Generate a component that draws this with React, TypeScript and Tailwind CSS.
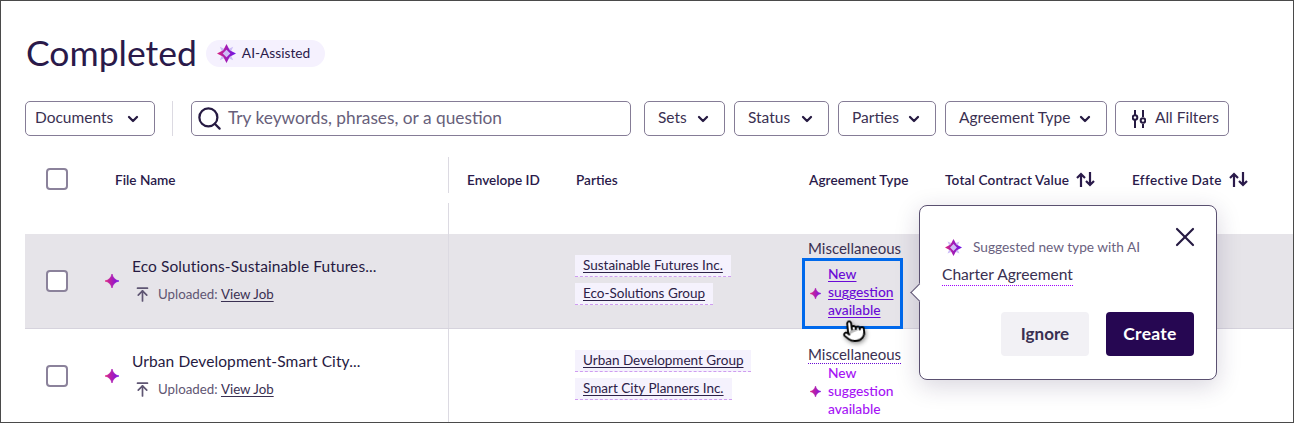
import { ArrowUpToLine, ChevronDown, Pointer, Search, X } from "lucide-react";

const FONT = "font-['Lato','Noto_Sans',sans-serif]";

function Sparkle({ id, size = 14 }: { id: string; size?: number }) {
  return (
    <svg width={size} height={size} viewBox="0 0 16 16" className="shrink-0">
      <defs>
        <linearGradient id={id} x1="0" y1="0" x2="1" y2="0">
          <stop offset="0" stopColor="#e0287f" />
          <stop offset="1" stopColor="#7a12e8" />
        </linearGradient>
      </defs>
      <path d="M8 0 C9 4 11.5 7 16 8 C11.5 9 9 12 8 16 C7 12 4.5 9 0 8 C4.5 7 7 4 8 0Z" fill={`url(#${id})`} stroke={`url(#${id})`} strokeWidth="0.8" />
    </svg>
  );
}

function AiMark({ id, size = 20 }: { id: string; size?: number }) {
  return (
    <svg width={size} height={size} viewBox="0 0 20 20" className="shrink-0">
      <defs>
        <linearGradient id={id} x1="0" y1="0" x2="1" y2="0">
          <stop offset="0" stopColor="#d9237f" />
          <stop offset="1" stopColor="#6a14ea" />
        </linearGradient>
      </defs>
      <path d="M3 3 L10 6 L17 3 L14 10 L17 17 L10 14 L3 17 L6 10Z" fill="#cdbcf7" />
      <path
        fillRule="evenodd"
        d="M10 0 L13.4 6.6 L20 10 L13.4 13.4 L10 20 L6.6 13.4 L0 10 L6.6 6.6Z M10 6 L6 10 L10 14 L14 10Z"
        fill={`url(#${id})`}
      />
    </svg>
  );
}

function FilterButton({ label, className }: { label: string; className: string }) {
  return (
    <button className={`h-[35px] flex items-center justify-between border border-[#857c96] rounded-[5px] bg-white text-[15.5px] text-[#3a3052] ${className}`}>
      <span className="pb-px">{label}</span>
      <ChevronDown size={16} strokeWidth={3.4} className="text-[#261a42]" />
    </button>
  );
}

function Checkbox() {
  return <div className="w-[22px] h-[22px] rounded-[4px] border-2 border-[#8b829b] bg-white shrink-0" />;
}

function SortArrows() {
  return (
    <svg width="19" height="15" viewBox="0 0 19 15" fill="none" stroke="#2a1a4a" strokeWidth="2.2" className="ml-[7px] shrink-0">
      <path d="M5 15V2M1 6l4-4 4 4" />
      <path d="M14 0v13M10 9l4 4 4-4" />
    </svg>
  );
}

function PartyChip({ name }: { name: string }) {
  return (
    <div className="w-fit h-[22px] px-2 flex items-center bg-[#f5f2fd] border-b border-dashed border-[#cf9df0] text-[13.5px] text-[#2c2147] underline underline-offset-2">
      {name}
    </div>
  );
}

function Row({ id, file, parties, bg, children }: { id: string; file: string; parties: string[]; bg: string; children: React.ReactNode }) {
  return (
    <div className={`h-[95px] ml-[24px] flex shrink-0 border-b border-[#d6d3dd] ${bg}`}>
      <div className="w-[424px] shrink-0 flex items-center border-r border-[#dcdae2]">
        <div className="ml-[21px]"><Checkbox /></div>
        <div className="ml-[37px]"><Sparkle id={id} /></div>
        <div className="ml-[13px] pb-[2px] flex flex-col gap-[10px]">
          <div className="text-[15.5px] leading-[18px] text-[#261a42] tracking-[0.1px]">{file}</div>
          <div className="flex items-center text-[13.3px] leading-[18px] text-[#5f5673]">
            <ArrowUpToLine size={17} strokeWidth={2.4} className="ml-[2px] mr-[7px] text-[#5f5673]" />
            Uploaded:&nbsp;<span className="underline underline-offset-2 text-[#3a3052]">View Job</span>
          </div>
        </div>
      </div>
      <div className="w-[126px] shrink-0" />
      <div className="w-[233px] shrink-0 pb-[2px] flex flex-col justify-center gap-[6px]">
        {parties.map((p) => <PartyChip key={p} name={p} />)}
      </div>
      <div className="flex-1 min-w-0">{children}</div>
    </div>
  );
}

export default function App() {
  return (
    <div className={`relative w-[1294px] h-[423px] overflow-hidden bg-white border border-[#4a4a4a] ${FONT}`}>
      {/* Title */}
      <div className="h-[100px] pl-[25px] pt-[32px] flex items-start gap-[9px]">
        <h1 className="text-[35.5px] leading-[40px] text-[#2a1a4a]">Completed</h1>
        <div className="mt-[7px] h-[27px] pl-[11px] pr-[15px] flex items-center gap-[6px] rounded-full bg-[#f5f1fe] text-[13.7px] text-[#2a1a4a]">
          <AiMark id="ai-badge" size={19} />
          AI-Assisted
        </div>
      </div>

      {/* Filters */}
      <div className="h-[35px] ml-[24px] flex items-center">
        <FilterButton label="Documents" className="w-[130px] pl-[9px] pr-[13px]" />
        <div className="w-px h-[35px] bg-[#dcdae2] ml-[17px] mr-[18px]" />
        <div className="w-[440px] h-[35px] flex items-center border border-[#857c96] rounded-[5px] pl-[4px] gap-[5px]">
          <Search size={27} strokeWidth={2} className="text-[#261a42]" />
          <span className="pb-px text-[17.3px] text-[#685f7b]">Try keywords, phrases, or a question</span>
        </div>
        <FilterButton label="Sets" className="w-[81px] px-[13px] ml-[13px]" />
        <FilterButton label="Status" className="w-[95px] px-[13px] ml-[9px]" />
        <FilterButton label="Parties" className="w-[98px] px-[13px] ml-[9px]" />
        <FilterButton label="Agreement Type" className="w-[162px] px-[13px] ml-[9px]" />
        <button className="w-[114px] h-[35px] ml-[8px] flex items-center pl-[16px] gap-[9px] border border-[#857c96] rounded-[5px] text-[15.5px] text-[#3a3052]">
          <svg width="14" height="20" viewBox="0 0 14 20" fill="none" stroke="#261a42" strokeWidth="2" className="shrink-0">
            <path d="M3 1v5M3 11v8M11 1v7M11 15v4" />
            <circle cx="3" cy="8.5" r="2.3" />
            <circle cx="11" cy="11.5" r="2.3" />
          </svg>
          <span className="pb-px">All Filters</span>
        </button>
      </div>

      {/* Table header */}
      <div className="mt-[21px] h-[36px] ml-[24px] flex text-[13.6px] font-semibold text-[#2a1a4a]">
        <div className="w-[424px] h-full shrink-0 flex items-start border-r border-[#dcdae2]">
          <div className="ml-[21px] mt-[11px]"><Checkbox /></div>
          <span className="ml-[47px] mt-[13px]">File Name</span>
        </div>
        <div className="w-[126px] shrink-0 pt-[13px] pl-[18px]">Envelope ID</div>
        <div className="w-[233px] shrink-0 pt-[13px] pl-px">Parties</div>
        <div className="w-[136px] shrink-0 pt-[13px] pl-px tracking-[0.07px]">Agreement Type</div>
        <div className="w-[187px] shrink-0 pt-[13px] pl-px flex items-start tracking-[0.15px]">Total Contract Value<span className="mt-[2px]"><SortArrows /></span></div>
        <div className="pt-[13px] pl-px flex items-start tracking-[0.3px]">Effective Date<span className="mt-[2px]"><SortArrows /></span></div>
      </div>
      <div className="h-[41px] pt-[10px] ml-[24px]">
        <div className="w-[424px] h-full border-r border-[#dcdae2]" />
      </div>

      {/* Rows */}
      <Row id="spark-1" file="Eco Solutions-Sustainable Futures..." parties={["Sustainable Futures Inc.", "Eco-Solutions Group"]} bg="bg-[#e6e4e9]">
        <div className="pt-[5px]">
          <div className="text-[15px] leading-[18px] text-[#3a3052]">Miscellaneous</div>
          <div className="-ml-[6px] mt-[1px] w-[101px] h-[71px] border-[3px] border-[#0069ec] flex items-center pl-[5px] gap-[7px]">
            <Sparkle id="spark-1b" size={11} />
            <div className="pb-[3px] text-[13.8px] leading-[18px] font-medium text-[#6a0ad6] underline underline-offset-2">New<br />suggestion<br />available</div>
          </div>
        </div>
      </Row>
      <Row id="spark-2" file="Urban Development-Smart City..." parties={["Urban Development Group", "Smart City Planners Inc."]} bg="bg-white">
        <div className="pt-[16px]">
          <div className="w-fit text-[15px] leading-[18px] text-[#3a3052] border-b border-dotted border-[#6a0ad6]">Miscellaneous</div>
          <div className="-ml-[3px] flex items-center pl-[5px] gap-[7px]">
            <Sparkle id="spark-2b" size={11} />
            <div className="text-[13.8px] leading-[18px] font-medium text-[#a513f5]">New<br />suggestion<br />available</div>
          </div>
        </div>
      </Row>

      {/* Popover */}
      <div className="absolute left-[918px] top-[204px] w-[298px] h-[175px] bg-white border border-[#5a5070] rounded-[8px] shadow-[0_6px_24px_rgba(40,20,70,0.18)] pl-[22px] pr-[22px]">
        <div className="absolute -left-[7px] top-[80px] w-[13px] h-[13px] rotate-45 bg-white border-l border-b border-[#5a5070]" />
        <X size={32} strokeWidth={1.6} className="absolute left-[249px] top-[15px] text-[#261a42]" />
        <div className="pt-[32px] pl-[3px] flex items-center gap-[11px] text-[13.7px] leading-[18px] text-[#6a6280]">
          <AiMark id="ai-pop" size={17} />
          Suggested new type with AI
        </div>
        <div className="mt-[8px] w-fit text-[15.6px] leading-[20px] text-[#3a3052] border-b border-dotted border-[#a100ff] pb-[1px]">Charter Agreement</div>
        <div className="mt-[26px] flex justify-end gap-[17px]">
          <button className="w-[88px] h-[44px] rounded-[4px] bg-[#f2f1f5] text-[17px] font-bold text-[#3a3052]">Ignore</button>
          <button className="w-[88px] h-[44px] rounded-[4px] bg-[#260752] text-[17.5px] tracking-[0.3px] font-bold text-white">Create</button>
        </div>
      </div>

      {/* Mouse cursor */}
      <Pointer size={24} strokeWidth={1.8} fill="white" className="absolute left-[841px] top-[318px] text-black -rotate-6 drop-shadow-[1px_2px_2px_rgba(0,0,0,0.4)]" />
    </div>
  );
}
